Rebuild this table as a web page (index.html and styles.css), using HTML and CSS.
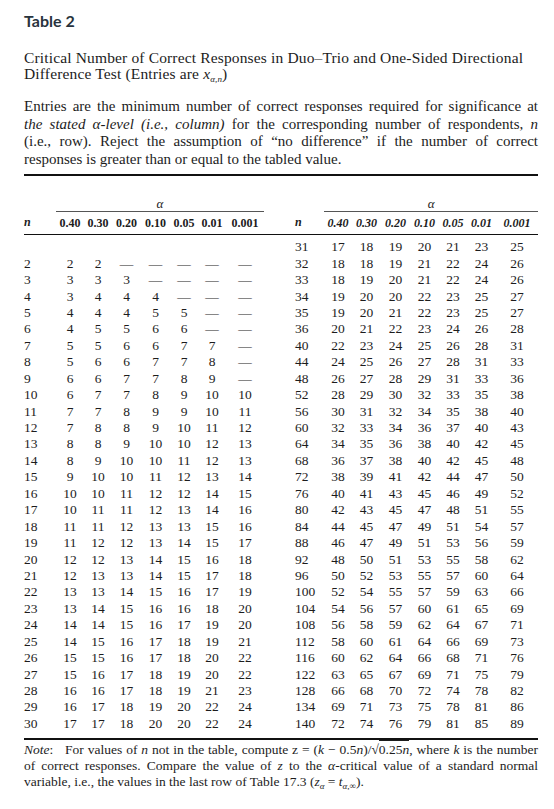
FILE: index.html
```html
<!DOCTYPE html>
<html lang="en">
<head>
<meta charset="utf-8">
<title>Table 2</title>
<link rel="stylesheet" href="styles.css">
</head>
<body>
<div class="page">
  <h1 class="label">Table 2</h1>
  <p class="title">Critical Number of Correct Responses in Duo–Trio and One-Sided Directional<br>Difference Test (Entries are <i>x</i><sub><i>α,n</i></sub>)</p>
  <div class="intro">
    <span class="jl">Entries are the minimum number of correct responses required for significance at</span>
    <span class="jl"><i>the stated α-level (i.e., column)</i> for the corresponding number of respondents, <i>n</i></span>
    <span class="jl">(i.e., row). Reject the assumption of “no difference” if the number of correct</span>
    <span class="last">responses is greater than or equal to the tabled value.</span>
  </div>
  <table class="crit">
    <colgroup>
      <col class="c-n1"><col class="c28"><col class="c28"><col class="c29"><col class="c29"><col class="c28"><col class="c28"><col class="c-last1">
      <col class="c-sp">
      <col class="c-n2"><col class="c28"><col class="c29"><col class="c29"><col class="c29"><col class="c28"><col class="c29"><col class="c-last2">
    </colgroup>
    <thead>
      <tr class="alpha-row"><td></td><td colspan="7" class="alpha"><i>α</i></td><td></td><td></td><td colspan="7" class="alpha"><i>α</i></td></tr>
      <tr class="head-row">
        <th class="n"><i>n</i></th><th>0.40</th><th>0.30</th><th>0.20</th><th>0.10</th><th>0.05</th><th>0.01</th><th>0.001</th>
        <th></th>
        <th class="n"><i>n</i></th><th class="it">0.40</th><th class="it">0.30</th><th class="it">0.20</th><th class="it">0.10</th><th class="it">0.05</th><th class="it">0.01</th><th class="it">0.001</th>
      </tr>
    </thead>
    <tbody>
      <tr class="gap"><td colspan="17"></td></tr>
      <tr><td class="n"></td><td></td><td></td><td></td><td></td><td></td><td></td><td></td><td></td><td class="n">31</td><td>17</td><td>18</td><td>19</td><td>20</td><td>21</td><td>23</td><td>25</td></tr>
      <tr><td class="n">2</td><td>2</td><td>2</td><td>—</td><td>—</td><td>—</td><td>—</td><td>—</td><td></td><td class="n">32</td><td>18</td><td>18</td><td>19</td><td>21</td><td>22</td><td>24</td><td>26</td></tr>
      <tr><td class="n">3</td><td>3</td><td>3</td><td>3</td><td>—</td><td>—</td><td>—</td><td>—</td><td></td><td class="n">33</td><td>18</td><td>19</td><td>20</td><td>21</td><td>22</td><td>24</td><td>26</td></tr>
      <tr><td class="n">4</td><td>3</td><td>4</td><td>4</td><td>4</td><td>—</td><td>—</td><td>—</td><td></td><td class="n">34</td><td>19</td><td>20</td><td>20</td><td>22</td><td>23</td><td>25</td><td>27</td></tr>
      <tr><td class="n">5</td><td>4</td><td>4</td><td>4</td><td>5</td><td>5</td><td>—</td><td>—</td><td></td><td class="n">35</td><td>19</td><td>20</td><td>21</td><td>22</td><td>23</td><td>25</td><td>27</td></tr>
      <tr><td class="n">6</td><td>4</td><td>5</td><td>5</td><td>6</td><td>6</td><td>—</td><td>—</td><td></td><td class="n">36</td><td>20</td><td>21</td><td>22</td><td>23</td><td>24</td><td>26</td><td>28</td></tr>
      <tr><td class="n">7</td><td>5</td><td>5</td><td>6</td><td>6</td><td>7</td><td>7</td><td>—</td><td></td><td class="n">40</td><td>22</td><td>23</td><td>24</td><td>25</td><td>26</td><td>28</td><td>31</td></tr>
      <tr><td class="n">8</td><td>5</td><td>6</td><td>6</td><td>7</td><td>7</td><td>8</td><td>—</td><td></td><td class="n">44</td><td>24</td><td>25</td><td>26</td><td>27</td><td>28</td><td>31</td><td>33</td></tr>
      <tr><td class="n">9</td><td>6</td><td>6</td><td>7</td><td>7</td><td>8</td><td>9</td><td>—</td><td></td><td class="n">48</td><td>26</td><td>27</td><td>28</td><td>29</td><td>31</td><td>33</td><td>36</td></tr>
      <tr><td class="n">10</td><td>6</td><td>7</td><td>7</td><td>8</td><td>9</td><td>10</td><td>10</td><td></td><td class="n">52</td><td>28</td><td>29</td><td>30</td><td>32</td><td>33</td><td>35</td><td>38</td></tr>
      <tr><td class="n">11</td><td>7</td><td>7</td><td>8</td><td>9</td><td>9</td><td>10</td><td>11</td><td></td><td class="n">56</td><td>30</td><td>31</td><td>32</td><td>34</td><td>35</td><td>38</td><td>40</td></tr>
      <tr><td class="n">12</td><td>7</td><td>8</td><td>8</td><td>9</td><td>10</td><td>11</td><td>12</td><td></td><td class="n">60</td><td>32</td><td>33</td><td>34</td><td>36</td><td>37</td><td>40</td><td>43</td></tr>
      <tr><td class="n">13</td><td>8</td><td>8</td><td>9</td><td>10</td><td>10</td><td>12</td><td>13</td><td></td><td class="n">64</td><td>34</td><td>35</td><td>36</td><td>38</td><td>40</td><td>42</td><td>45</td></tr>
      <tr><td class="n">14</td><td>8</td><td>9</td><td>10</td><td>10</td><td>11</td><td>12</td><td>13</td><td></td><td class="n">68</td><td>36</td><td>37</td><td>38</td><td>40</td><td>42</td><td>45</td><td>48</td></tr>
      <tr><td class="n">15</td><td>9</td><td>10</td><td>10</td><td>11</td><td>12</td><td>13</td><td>14</td><td></td><td class="n">72</td><td>38</td><td>39</td><td>41</td><td>42</td><td>44</td><td>47</td><td>50</td></tr>
      <tr><td class="n">16</td><td>10</td><td>10</td><td>11</td><td>12</td><td>12</td><td>14</td><td>15</td><td></td><td class="n">76</td><td>40</td><td>41</td><td>43</td><td>45</td><td>46</td><td>49</td><td>52</td></tr>
      <tr><td class="n">17</td><td>10</td><td>11</td><td>11</td><td>12</td><td>13</td><td>14</td><td>16</td><td></td><td class="n">80</td><td>42</td><td>43</td><td>45</td><td>47</td><td>48</td><td>51</td><td>55</td></tr>
      <tr><td class="n">18</td><td>11</td><td>11</td><td>12</td><td>13</td><td>13</td><td>15</td><td>16</td><td></td><td class="n">84</td><td>44</td><td>45</td><td>47</td><td>49</td><td>51</td><td>54</td><td>57</td></tr>
      <tr><td class="n">19</td><td>11</td><td>12</td><td>12</td><td>13</td><td>14</td><td>15</td><td>17</td><td></td><td class="n">88</td><td>46</td><td>47</td><td>49</td><td>51</td><td>53</td><td>56</td><td>59</td></tr>
      <tr><td class="n">20</td><td>12</td><td>12</td><td>13</td><td>14</td><td>15</td><td>16</td><td>18</td><td></td><td class="n">92</td><td>48</td><td>50</td><td>51</td><td>53</td><td>55</td><td>58</td><td>62</td></tr>
      <tr><td class="n">21</td><td>12</td><td>13</td><td>13</td><td>14</td><td>15</td><td>17</td><td>18</td><td></td><td class="n">96</td><td>50</td><td>52</td><td>53</td><td>55</td><td>57</td><td>60</td><td>64</td></tr>
      <tr><td class="n">22</td><td>13</td><td>13</td><td>14</td><td>15</td><td>16</td><td>17</td><td>19</td><td></td><td class="n">100</td><td>52</td><td>54</td><td>55</td><td>57</td><td>59</td><td>63</td><td>66</td></tr>
      <tr><td class="n">23</td><td>13</td><td>14</td><td>15</td><td>16</td><td>16</td><td>18</td><td>20</td><td></td><td class="n">104</td><td>54</td><td>56</td><td>57</td><td>60</td><td>61</td><td>65</td><td>69</td></tr>
      <tr><td class="n">24</td><td>14</td><td>14</td><td>15</td><td>16</td><td>17</td><td>19</td><td>20</td><td></td><td class="n">108</td><td>56</td><td>58</td><td>59</td><td>62</td><td>64</td><td>67</td><td>71</td></tr>
      <tr><td class="n">25</td><td>14</td><td>15</td><td>16</td><td>17</td><td>18</td><td>19</td><td>21</td><td></td><td class="n">112</td><td>58</td><td>60</td><td>61</td><td>64</td><td>66</td><td>69</td><td>73</td></tr>
      <tr><td class="n">26</td><td>15</td><td>15</td><td>16</td><td>17</td><td>18</td><td>20</td><td>22</td><td></td><td class="n">116</td><td>60</td><td>62</td><td>64</td><td>66</td><td>68</td><td>71</td><td>76</td></tr>
      <tr><td class="n">27</td><td>15</td><td>16</td><td>17</td><td>18</td><td>19</td><td>20</td><td>22</td><td></td><td class="n">122</td><td>63</td><td>65</td><td>67</td><td>69</td><td>71</td><td>75</td><td>79</td></tr>
      <tr><td class="n">28</td><td>16</td><td>16</td><td>17</td><td>18</td><td>19</td><td>21</td><td>23</td><td></td><td class="n">128</td><td>66</td><td>68</td><td>70</td><td>72</td><td>74</td><td>78</td><td>82</td></tr>
      <tr><td class="n">29</td><td>16</td><td>17</td><td>18</td><td>19</td><td>20</td><td>22</td><td>24</td><td></td><td class="n">134</td><td>69</td><td>71</td><td>73</td><td>75</td><td>78</td><td>81</td><td>86</td></tr>
      <tr><td class="n">30</td><td>17</td><td>17</td><td>18</td><td>20</td><td>20</td><td>22</td><td>24</td><td></td><td class="n">140</td><td>72</td><td>74</td><td>76</td><td>79</td><td>81</td><td>85</td><td>89</td></tr>
      <tr class="gap-end"><td colspan="17"></td></tr>
    </tbody>
  </table>
  <div class="note">
    <span class="jl"><i>Note</i>:&nbsp;&nbsp; For values of <i>n</i> not in the table, compute z = (<i>k</i> − 0.5<i>n</i>)/√<span class="rad">0.25<i>n</i></span>, where <i>k</i> is the number</span>
    <span class="jl">of correct responses. Compare the value of <i>z</i> to the <i>α</i>-critical value of a standard normal</span>
    <span class="last">variable, i.e., the values in the last row of Table 17.3 (<i>z</i><sub><i>α</i></sub> = <i>t</i><sub><i>α</i>,∞</sub>).</span>
  </div>
</div>
</body>
</html>
```
FILE: styles.css
```css
html, body {
  margin: 0;
  padding: 0;
  background: #ffffff;
}

.page {
  width: 514px;
  padding: 12px 0 0 24px;
  color: #1c1c1c;
  font-family: "Liberation Serif", "Times New Roman", serif;
}

.label {
  margin: 0;
  font-family: Lato, "Open Sans", sans-serif;
  font-weight: 700;
  font-size: 16px;
  line-height: 18px;
  color: #28333d;
}

.title {
  margin: 20px 0 0;
  font-size: 15.5px;
  line-height: 16px;
  letter-spacing: 0.15px;
}

.title sub,
.note sub {
  font-size: 9px;
  line-height: 0;
  vertical-align: -3px;
}

.intro {
  margin-top: 16px;
  font-size: 15px;
  line-height: 17.5px;
  padding-bottom: 6px;
  border-bottom: 2px solid #111;
}

.jl {
  display: block;
  text-align: justify;
  text-align-last: justify;
}

.last {
  display: block;
}

.crit {
  margin-top: 21px;
  width: 514px;
  border-collapse: collapse;
  table-layout: fixed;
  font-size: 13.5px;
  border-bottom: 2px solid #111;
}

.c-n1 { width: 32px; }
.c28 { width: 28px; }
.c29 { width: 29px; }
.c-last1 { width: 38px; }
.c-sp { width: 31px; }
.c-n2 { width: 29px; }
.c-last2 { width: 42px; }

.crit td,
.crit th {
  padding: 0;
  text-align: center;
  white-space: nowrap;
}

.crit .n {
  text-align: left;
}

.alpha-row td {
  height: 14px;
  line-height: 14px;
  vertical-align: top;
}

.alpha {
  border-bottom: 1px solid #555;
  font-size: 13px;
}

.head-row th {
  height: 22px;
  font-size: 12px;
  font-weight: 700;
  border-bottom: 1.5px solid #111;
  vertical-align: middle;
}

.head-row th.it {
  font-style: italic;
}

.crit tbody tr td {
  height: 16.45px;
  line-height: 16px;
}

.crit tr.gap td {
  height: 4px;
}

.crit tr.gap-end td {
  height: 6px;
}

.rad {
  border-top: 1px solid #1c1c1c;
  padding-top: 1px;
}

.note {
  margin-top: 2px;
  font-size: 13.5px;
  line-height: 16px;
}
```
